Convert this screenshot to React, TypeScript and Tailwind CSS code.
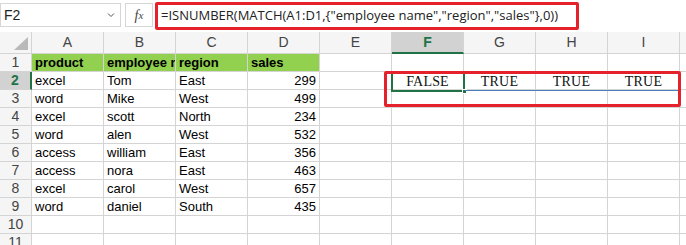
import React from "react";

const COLS = ["A", "B", "C", "D", "E", "F", "G", "H", "I"];

const DATA: string[][] = [
  ["product", "employee name", "region", "sales"],
  ["excel", "Tom", "East", "299"],
  ["word", "Mike", "West", "499"],
  ["excel", "scott", "North", "234"],
  ["word", "alen", "West", "532"],
  ["access", "william", "East", "356"],
  ["access", "nora", "East", "463"],
  ["excel", "carol", "West", "657"],
  ["word", "daniel", "South", "435"],
];

const RESULTS = ["FALSE", "TRUE", "TRUE", "TRUE"];

const FORMULA = '=ISNUMBER(MATCH(A1:D1,{"employee name","region","sales"},0))';

function Cell({ row, col }: { row: number; col: number }) {
  const data = DATA[row - 1];
  const isHeader = row === 1;
  const green = isHeader && col < 4;
  let content: React.ReactNode = null;
  let align = "justify-start";
  let serif = false;

  if (data && col < 4) {
    content = data[col];
    if (col === 3 && !isHeader) align = "justify-end";
  }
  if (row === 2 && col >= 5) {
    content = RESULTS[col - 5];
    align = "justify-center";
    serif = true;
  }

  return (
    <div
      className={`flex h-[18px] items-center overflow-hidden whitespace-nowrap border-b border-r border-[#d4d4d4] px-[3px] pt-[1px] ${align} ${
        green ? "bg-[#92d050] font-bold" : "bg-white"
      }`}
    >
      {serif ? (
        <span className="[font-family:'Liberation_Serif',serif] text-[14px] tracking-[0.2px] text-[#111]">
          {content}
        </span>
      ) : (
        content
      )}
    </div>
  );
}

export default function App() {
  const rows = Array.from({ length: 11 }, (_, i) => i + 1);

  return (
    <div className="h-[245px] w-[686px] overflow-hidden bg-white [font-family:'Liberation_Sans',Arial,sans-serif] text-[13px] text-black">
      {/* formula bar */}
      <div className="flex h-[32px] items-start pt-[2px]">
        <div className="mt-[1px] flex h-[24px] w-[121px] items-center justify-between border border-[#d6d6d6] bg-white pl-[3px] pr-[4px] text-[14px] text-[#222]">
          <span>F2</span>
          <svg width="8" height="6" viewBox="0 0 8 6" className="mr-[1px]">
            <path d="M1 1.5 L4 4.5 L7 1.5" fill="none" stroke="#555" strokeWidth="1" />
          </svg>
        </div>
        <div className="ml-[4px] mt-[1px] flex h-[24px] w-[28px] items-center justify-center border border-[#d6d6d6] bg-white [font-family:'Liberation_Serif',serif] text-[14px] italic text-[#444]">
          f<span className="text-[11px]">x</span>
        </div>
        <div className="ml-[2px] flex h-[28px] w-[424px] items-center rounded-[2px] border-[3px] border-[#e5222b] bg-white pl-[3px] [font-family:'Open_Sans',sans-serif] text-[13px] text-[#222]">
          {FORMULA}
        </div>
      </div>

      {/* grid */}
      <div className="relative">
        <div className="grid grid-cols-[32px_repeat(9,72px)_1fr]">
          {/* column header row */}
          <div className="flex h-[22px] items-end justify-end border-b border-r border-[#d4d4d4] bg-[#f5f5f5] pb-[3px] pr-[3px]">
            <svg width="14" height="13" viewBox="0 0 14 13">
              <polygon points="14,0 14,13 0,13" fill="#b9b9b9" />
            </svg>
          </div>
          {COLS.map((c) =>
            c === "F" ? (
              <div
                key={c}
                className="flex h-[22px] items-center justify-center border-b-2 border-r border-b-[#217346] border-r-[#d4d4d4] bg-[#d2d2d2] text-[14px] font-bold text-[#217346]"
              >
                {c}
              </div>
            ) : (
              <div
                key={c}
                className="flex h-[22px] items-center justify-center border-b border-r border-[#d4d4d4] bg-[#f5f5f5] text-[14px] text-[#444]"
              >
                {c}
              </div>
            )
          )}
          <div className="h-[22px] border-b border-[#d4d4d4] bg-[#f5f5f5]" />

          {rows.map((r) => (
            <React.Fragment key={r}>
              {r === 2 ? (
                <div className="flex h-[18px] items-center justify-center border-b border-r-2 border-b-[#d4d4d4] border-r-[#217346] bg-[#d2d2d2] text-[14px] font-bold text-[#217346]">
                  {r}
                </div>
              ) : (
                <div className="flex h-[18px] items-center justify-center border-b border-r border-[#d4d4d4] bg-[#f5f5f5] text-[14px] text-[#444]">
                  {r}
                </div>
              )}
              {COLS.map((c, ci) => (
                <Cell key={c} row={r} col={ci} />
              ))}
              <div className="h-[18px] border-b border-[#d4d4d4] bg-white" />
            </React.Fragment>
          ))}
        </div>

        {/* selection on F2 */}
        <div className="absolute left-[391px] top-[40px] h-[20px] w-[74px] border-2 border-[#217346]" />
        <div className="absolute left-[462px] top-[57px] h-[5px] w-[5px] border border-white bg-[#217346]" />
        {/* blue underline G2:I2 */}
        <div className="absolute left-[465px] top-[58px] h-[1px] w-[215px] bg-[#4a7ebb]" />
        {/* red annotation box */}
        <div className="absolute left-[384px] top-[39px] h-[36px] w-[297px] rounded-[2px] border-[3px] border-[#e5222b]" />
      </div>
    </div>
  );
}
